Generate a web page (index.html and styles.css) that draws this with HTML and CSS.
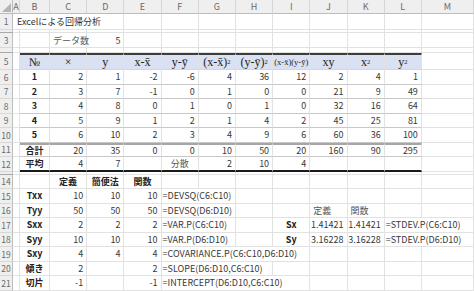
FILE: index.html
```html
<!DOCTYPE html>
<html>

<head>
    <title>Excelによる回帰分析</title>
    <meta charset="UTF-8">
    <link rel="stylesheet" href="styles.css">
</head>

<body>
    <div class="sheet">
        <!-- column letters -->
        <div class="corner"></div><div class="ch">A</div><div class="ch">B</div><div class="ch">C</div><div class="ch">D</div><div class="ch">E</div><div class="ch">F</div><div class="ch">G</div><div class="ch">H</div><div class="ch">I</div><div class="ch">J</div><div class="ch">K</div><div class="ch">L</div><div class="ch">M</div>

        <!-- row 1: title -->
        <div class="rh">1</div><div class="c title span4">Excelによる回帰分析</div><div class="c"></div><div class="c"></div><div class="c"></div><div class="c"></div><div class="c"></div><div class="c"></div><div class="c"></div><div class="c"></div><div class="c"></div>
        <div class="rh hid"></div><div class="c"></div><div class="c"></div><div class="c"></div><div class="c"></div><div class="c"></div><div class="c"></div><div class="c"></div><div class="c"></div><div class="c"></div><div class="c"></div><div class="c"></div><div class="c"></div><div class="c"></div>

        <!-- row 3: data count -->
        <div class="rh">3</div><div class="c"></div><div class="c"></div><div class="c lbl spill">データ数</div><div class="c n">5</div><div class="c"></div><div class="c"></div><div class="c"></div><div class="c"></div><div class="c"></div><div class="c"></div><div class="c"></div><div class="c"></div><div class="c"></div>
        <div class="rh hid"></div><div class="c"></div><div class="c"></div><div class="c"></div><div class="c"></div><div class="c"></div><div class="c"></div><div class="c"></div><div class="c"></div><div class="c"></div><div class="c"></div><div class="c"></div><div class="c"></div><div class="c"></div>

        <!-- row 5: table header -->
        <div class="rh">5</div><div class="c"></div>
        <div class="c hd">№</div>
        <div class="c hd">×</div>
        <div class="c hd">y</div>
        <div class="c hd">x-x̄</div>
        <div class="c hd">y-ȳ</div>
        <div class="c hd">(x-x̄)<sup>2</sup></div>
        <div class="c hd">(y-ȳ)<sup>2</sup></div>
        <div class="c hd sm">(x-x̄)(y-ȳ)</div>
        <div class="c hd">xy</div>
        <div class="c hd">x<sup>2</sup></div>
        <div class="c hd">y<sup>2</sup></div>
        <div class="c"></div>

        <!-- rows 6-10: data -->
        <div class="rh">6</div><div class="c"></div><div class="c t b">1</div><div class="c t n">2</div><div class="c t n">1</div><div class="c t n">-2</div><div class="c t n">-6</div><div class="c t n">4</div><div class="c t n">36</div><div class="c t n">12</div><div class="c t n">2</div><div class="c t n">4</div><div class="c t n">1</div><div class="c"></div>
        <div class="rh">7</div><div class="c"></div><div class="c t b">2</div><div class="c t n">3</div><div class="c t n">7</div><div class="c t n">-1</div><div class="c t n">0</div><div class="c t n">1</div><div class="c t n">0</div><div class="c t n">0</div><div class="c t n">21</div><div class="c t n">9</div><div class="c t n">49</div><div class="c"></div>
        <div class="rh">8</div><div class="c"></div><div class="c t b">3</div><div class="c t n">4</div><div class="c t n">8</div><div class="c t n">0</div><div class="c t n">1</div><div class="c t n">0</div><div class="c t n">1</div><div class="c t n">0</div><div class="c t n">32</div><div class="c t n">16</div><div class="c t n">64</div><div class="c"></div>
        <div class="rh">9</div><div class="c"></div><div class="c t b">4</div><div class="c t n">5</div><div class="c t n">9</div><div class="c t n">1</div><div class="c t n">2</div><div class="c t n">1</div><div class="c t n">4</div><div class="c t n">2</div><div class="c t n">45</div><div class="c t n">25</div><div class="c t n">81</div><div class="c"></div>
        <div class="rh">10</div><div class="c"></div><div class="c t b">5</div><div class="c t n">6</div><div class="c t n">10</div><div class="c t n">2</div><div class="c t n">3</div><div class="c t n">4</div><div class="c t n">9</div><div class="c t n">6</div><div class="c t n">60</div><div class="c t n">36</div><div class="c t n">100</div><div class="c"></div>

        <!-- row 11: totals, row 12: means -->
        <div class="rh">11</div><div class="c"></div><div class="c t tot b">合計</div><div class="c t tot n">20</div><div class="c t tot n">35</div><div class="c t tot n">0</div><div class="c t tot n">0</div><div class="c t tot n">10</div><div class="c t tot n">50</div><div class="c t tot n">20</div><div class="c t tot n">160</div><div class="c t tot n">90</div><div class="c t tot n">295</div><div class="c"></div>
        <div class="rh">12</div><div class="c"></div><div class="c avg b">平均</div><div class="c avg n">4</div><div class="c avg n">7</div><div class="c avg"></div><div class="c avg m">分散</div><div class="c avg n">2</div><div class="c avg n">10</div><div class="c avg n">4</div><div class="c avg"></div><div class="c avg"></div><div class="c avg"></div><div class="c"></div>
        <div class="rh hid"></div><div class="c"></div><div class="c"></div><div class="c"></div><div class="c"></div><div class="c"></div><div class="c"></div><div class="c"></div><div class="c"></div><div class="c"></div><div class="c"></div><div class="c"></div><div class="c"></div><div class="c"></div>

        <!-- row 14: method headings -->
        <div class="rh">14</div><div class="c"></div><div class="c"></div><div class="c b">定義</div><div class="c b">簡便法</div><div class="c b">関数</div><div class="c"></div><div class="c"></div><div class="c"></div><div class="c"></div><div class="c"></div><div class="c"></div><div class="c"></div><div class="c"></div>

        <!-- rows 15-21: statistics -->
        <div class="rh">15</div><div class="c"></div><div class="c b">Txx</div><div class="c n">10</div><div class="c n">10</div><div class="c n">10</div><div class="c f span2">=DEVSQ(C6:C10)</div><div class="c"></div><div class="c"></div><div class="c"></div><div class="c"></div><div class="c"></div><div class="c"></div>
        <div class="rh">16</div><div class="c"></div><div class="c b">Tyy</div><div class="c n">50</div><div class="c n">50</div><div class="c n">50</div><div class="c f span2">=DEVSQ(D6:D10)</div><div class="c"></div><div class="c"></div><div class="c lbl">定義</div><div class="c lbl">関数</div><div class="c"></div><div class="c"></div>
        <div class="rh">17</div><div class="c"></div><div class="c b">Sxx</div><div class="c n">2</div><div class="c n">2</div><div class="c n">2</div><div class="c f span2">=VAR.P(C6:C10)</div><div class="c"></div><div class="c b">Sx</div><div class="c n">1.41421</div><div class="c n">1.41421</div><div class="c f span2">=STDEV.P(C6:C10)</div>
        <div class="rh">18</div><div class="c"></div><div class="c b">Syy</div><div class="c n">10</div><div class="c n">10</div><div class="c n">10</div><div class="c f span2">=VAR.P(D6:D10)</div><div class="c"></div><div class="c b">Sy</div><div class="c n">3.16228</div><div class="c n">3.16228</div><div class="c f span2">=STDEV.P(D6:D10)</div>
        <div class="rh">19</div><div class="c"></div><div class="c b">Sxy</div><div class="c n">4</div><div class="c n">4</div><div class="c n">4</div><div class="c f span4">=COVARIANCE.P(C6:C10,D6:D10)</div><div class="c"></div><div class="c"></div><div class="c"></div><div class="c"></div>
        <div class="rh">20</div><div class="c"></div><div class="c b">傾き</div><div class="c n">2</div><div class="c"></div><div class="c n">2</div><div class="c f span3">=SLOPE(D6:D10,C6:C10)</div><div class="c"></div><div class="c"></div><div class="c"></div><div class="c"></div><div class="c"></div>
        <div class="rh">21</div><div class="c"></div><div class="c b">切片</div><div class="c n">-1</div><div class="c"></div><div class="c n">-1</div><div class="c f span4">=INTERCEPT(D6:D10,C6:C10)</div><div class="c"></div><div class="c"></div><div class="c"></div><div class="c"></div>
        <div class="rh"></div><div class="c"></div><div class="c"></div><div class="c"></div><div class="c"></div><div class="c"></div><div class="c"></div><div class="c"></div><div class="c"></div><div class="c"></div><div class="c"></div><div class="c"></div><div class="c"></div><div class="c"></div>
    </div>
</body>

</html>
```

FILE: styles.css
```css
* {
    box-sizing: border-box;
}

body {
    margin: 0;
    background-color: #fff;
    overflow: hidden;
    font-family: "Noto Sans CJK JP", "Noto Sans", sans-serif;
}

.sheet {
    display: grid;
    width: 474px;
    grid-template-columns: 13px 7px 30px repeat(10, 37.2px) 1fr;
    grid-template-rows: 14px 16px 3px 15px 5px 17px repeat(7, 14.5px) 3px repeat(9, 14.5px);
}

/* Column letters and row numbers */
.ch,
.rh,
.corner {
    background-color: #efefef;
    color: #6a6a6a;
    display: flex;
    align-items: center;
    justify-content: center;
    line-height: 1;
}

.ch {
    font-size: 9px;
    border-right: 1px solid #d6d6d6;
    border-bottom: 1px solid #bdbdbd;
}

.rh {
    font-size: 8.5px;
    border-right: 1px solid #bdbdbd;
    border-bottom: 1px solid #d8d8d8;
    overflow: hidden;
}

.rh.hid {
    border-bottom-color: #a8a8a8;
}

.corner {
    position: relative;
    border-right: 1px solid #bdbdbd;
    border-bottom: 1px solid #bdbdbd;
}

.corner::after {
    content: '';
    position: absolute;
    right: 1px;
    bottom: 1px;
    width: 9px;
    height: 9px;
    background-color: #b5b5b5;
    clip-path: polygon(100% 0, 100% 100%, 0 100%);
}

/* Cells */
.c {
    display: flex;
    align-items: center;
    padding: 0 3px;
    font-size: 9px;
    line-height: 1;
    color: #383838;
    white-space: nowrap;
    overflow: hidden;
    border-right: 1px solid #e2e2e2;
    border-bottom: 1px solid #e2e2e2;
}

.n {
    justify-content: flex-end;
}

.m {
    justify-content: center;
    color: #555;
}

.b {
    justify-content: center;
    font-weight: bold;
    color: #222;
}

.lbl {
    color: #555;
}

.spill {
    overflow: visible;
}

.title {
    padding-left: 4px;
    color: #333;
}

.f {
    padding-left: 1px;
}

.span2 { grid-column: span 2; }
.span3 { grid-column: span 3; }
.span4 { grid-column: span 4; }

/* Regression table */
.hd {
    justify-content: center;
    background-color: #d9e1f2;
    border-top: 2px solid #3c3c3c;
    border-bottom-color: #cfd6e6;
    font-family: "Liberation Serif", serif;
    font-size: 12px;
    color: #1f1f1f;
}

.hd.sm {
    font-size: 8.5px;
}

.hd sup {
    font-size: 6.5px;
    line-height: 0;
    vertical-align: 5px;
}

.t {
    border-bottom-color: #c8c8c8;
}

.tot {
    border-top: 2px solid #a6a6a6;
}

.avg {
    border-bottom: 2px solid #1a1a1a;
}
```
